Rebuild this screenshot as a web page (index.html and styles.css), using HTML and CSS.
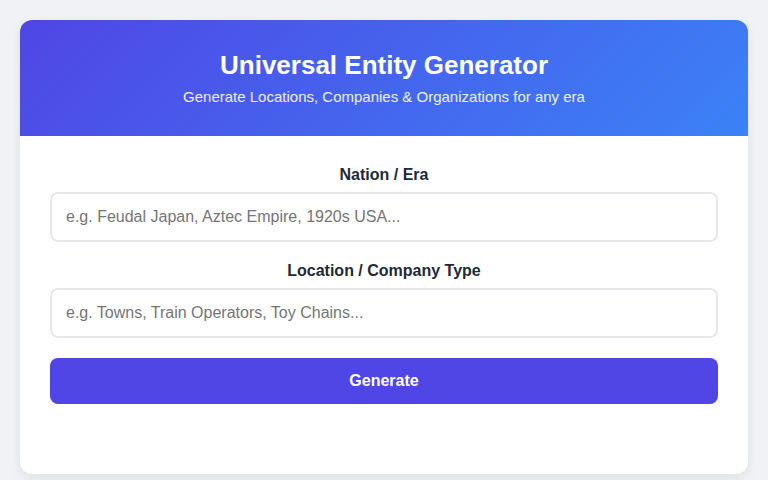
FILE: index.html
```html
<!DOCTYPE html>
<html lang="en">
<head>
<meta charset="UTF-8" />
<meta name="viewport" content="width=device-width,initial-scale=1.0" />
<title>Universal Entity Generator</title>
<link rel="stylesheet" href="styles.css">
</head>
<body>

<div class="card">
  <!-- Header -->
  <header class="card-head">
    <h1>Universal Entity Generator</h1>
    <p>Generate Locations, Companies &amp; Organizations for any era</p>
  </header>

  <!-- Form -->
  <form class="card-body" id="genForm">
    <div class="field">
      <label for="nation">Nation / Era</label>
      <input type="text" id="nation" placeholder="e.g. Feudal Japan, Aztec Empire, 1920s USA...">
    </div>
    <div class="field">
      <label for="etype">Location / Company Type</label>
      <input type="text" id="etype" placeholder="e.g. Towns, Train Operators, Toy Chains...">
    </div>
    <button type="submit">Generate</button>
  </form>
</div>

</body>
</html>
```

FILE: styles.css
```css
:root{
  --accent:#4f46e5;--accent2:#3b82f6;
  --bg:#f0f2f5;--card:#ffffff;--text:#1f2937;--radius:12px
}
*{box-sizing:border-box;margin:0;padding:0}
body{
  font-family:"Liberation Sans",Arial,sans-serif;
  background:var(--bg);color:var(--text);
  padding:20px
}
.card{
  background:var(--card);border-radius:var(--radius);overflow:hidden;
  box-shadow:0 4px 12px rgba(0,0,0,.08);
  height:454px
}
.card-head{
  background:linear-gradient(135deg,var(--accent),var(--accent2));
  color:#fff;text-align:center;
  padding:28px 20px 28px;height:116px
}
.card-head h1{font-size:26px;font-weight:700;line-height:34px}
.card-head p{font-size:15px;opacity:.9;margin-top:5px;line-height:20px}
.card-body{padding:30px 30px}
.field{margin-bottom:20px}
label{
  display:block;text-align:center;font-weight:700;font-size:16px;
  margin-bottom:8px;line-height:18px
}
input{
  width:100%;height:50px;padding:0 14px;
  font:inherit;font-size:16px;color:var(--text);
  border:2px solid #e5e7eb;border-radius:8px;background:#fff
}
input::placeholder{color:#757575}
input:focus{outline:none;border-color:var(--accent)}
button{
  width:100%;height:46px;background:var(--accent);color:#fff;border:none;
  font:inherit;font-weight:700;font-size:16px;border-radius:8px;cursor:pointer
}
button:hover{background:#4338ca}
```
